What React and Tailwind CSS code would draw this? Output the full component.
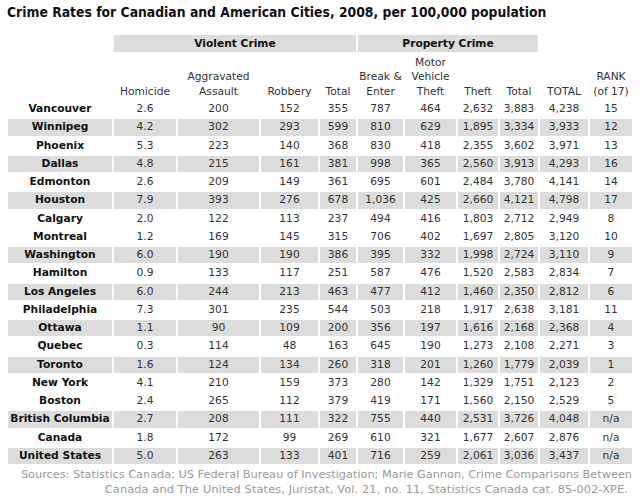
import React from "react";

const rows = [
  ["Vancouver", "2.6", "200", "152", "355", "787", "464", "2,632", "3,883", "4,238", "15", false],
  ["Winnipeg", "4.2", "302", "293", "599", "810", "629", "1,895", "3,334", "3,933", "12", true],
  ["Phoenix", "5.3", "223", "140", "368", "830", "418", "2,355", "3,602", "3,971", "13", false],
  ["Dallas", "4.8", "215", "161", "381", "998", "365", "2,560", "3,913", "4,293", "16", true],
  ["Edmonton", "2.6", "209", "149", "361", "695", "601", "2,484", "3,780", "4,141", "14", false],
  ["Houston", "7.9", "393", "276", "678", "1,036", "425", "2,660", "4,121", "4,798", "17", true],
  ["Calgary", "2.0", "122", "113", "237", "494", "416", "1,803", "2,712", "2,949", "8", false],
  ["Montreal", "1.2", "169", "145", "315", "706", "402", "1,697", "2,805", "3,120", "10", false],
  ["Washington", "6.0", "190", "190", "386", "395", "332", "1,998", "2,724", "3,110", "9", true],
  ["Hamilton", "0.9", "133", "117", "251", "587", "476", "1,520", "2,583", "2,834", "7", false],
  ["Los Angeles", "6.0", "244", "213", "463", "477", "412", "1,460", "2,350", "2,812", "6", true],
  ["Philadelphia", "7.3", "301", "235", "544", "503", "218", "1,917", "2,638", "3,181", "11", false],
  ["Ottawa", "1.1", "90", "109", "200", "356", "197", "1,616", "2,168", "2,368", "4", true],
  ["Quebec", "0.3", "114", "48", "163", "645", "190", "1,273", "2,108", "2,271", "3", false],
  ["Toronto", "1.6", "124", "134", "260", "318", "201", "1,260", "1,779", "2,039", "1", true],
  ["New York", "4.1", "210", "159", "373", "280", "142", "1,329", "1,751", "2,123", "2", false],
  ["Boston", "2.4", "265", "112", "379", "419", "171", "1,560", "2,150", "2,529", "5", false],
  ["British Columbia", "2.7", "208", "111", "322", "755", "440", "2,531", "3,726", "4,048", "n/a", true],
  ["Canada", "1.8", "172", "99", "269", "610", "321", "1,677", "2,607", "2,876", "n/a", false],
  ["United States", "5.0", "263", "133", "401", "716", "259", "2,061", "3,036", "3,437", "n/a", true],
];

const App = () => {
  return (
    <div className="w-[640px] h-[500px] bg-white font-['DejaVu_Sans',Verdana,sans-serif] overflow-hidden">
      <div className="ml-[7px] pt-[4px] text-[13.8px] leading-[16px] font-bold text-[#111] font-['DejaVu_Sans_Condensed','DejaVu_Sans',sans-serif]">
        Crime Rates for Canadian and American Cities, 2008, per 100,000 population
      </div>

      <table className="ml-[6px] mt-[13px] w-[628px] table-fixed border-separate border-spacing-[2px] text-[10.67px] text-[#333]">
        <colgroup>
          <col className="w-[104px]" />
          <col className="w-[62px]" />
          <col className="w-[81px]" />
          <col className="w-[57px]" />
          <col className="w-[36px]" />
          <col className="w-[45px]" />
          <col className="w-[51px]" />
          <col className="w-[40px]" />
          <col className="w-[38px]" />
          <col className="w-[48px]" />
          <col className="w-[42px]" />
        </colgroup>
        <thead>
          <tr className="h-[17px]">
            <th className="p-0"></th>
            <th colSpan={4} className="p-0 bg-[#dcdcdc] font-bold text-[#111] leading-[17px]">
              Violent Crime
            </th>
            <th colSpan={4} className="p-0 bg-[#dcdcdc] font-bold text-[#111] leading-[17px]">
              Property Crime
            </th>
            <th className="p-0"></th>
            <th className="p-0"></th>
          </tr>
          <tr className="h-[45px] font-normal leading-[14.5px] align-bottom">
            <th className="p-0 font-normal"></th>
            <th className="p-0 font-normal whitespace-nowrap">Homicide</th>
            <th className="p-0 font-normal whitespace-nowrap">
              Aggravated
              <br />
              Assault
            </th>
            <th className="p-0 font-normal whitespace-nowrap">Robbery</th>
            <th className="p-0 font-normal whitespace-nowrap">Total</th>
            <th className="p-0 font-normal whitespace-nowrap">
              Break &amp;
              <br />
              Enter
            </th>
            <th className="p-0 font-normal whitespace-nowrap">
              Motor
              <br />
              Vehicle
              <br />
              Theft
            </th>
            <th className="p-0 font-normal whitespace-nowrap">Theft</th>
            <th className="p-0 font-normal whitespace-nowrap">Total</th>
            <th className="p-0 font-normal whitespace-nowrap">TOTAL</th>
            <th className="p-0 font-normal whitespace-nowrap">
              RANK
              <br />
              (of 17)
            </th>
          </tr>
        </thead>
        <tbody>
          {rows.map((r) => {
            const shade = r[11] ? "bg-[#dcdcdc]" : "";
            return (
              <tr key={r[0]} className="h-[16.25px] leading-[14.25px]">
                <td className={`p-0 text-center font-bold text-[#111] whitespace-nowrap ${shade}`}>{r[0]}</td>
                {r.slice(1, 11).map((v, i) => (
                  <td key={i} className={`p-0 text-center whitespace-nowrap ${shade}`}>
                    {v}
                  </td>
                ))}
              </tr>
            );
          })}
        </tbody>
      </table>

      <div className="mt-[1px] w-[632px] text-right text-[11.3px] leading-[15px] text-[#999] whitespace-nowrap">
        <div>Sources: Statistics Canada; US Federal Bureau of Investigation; Marie Gannon, Crime Comparisons Between</div>
        <div className="pr-[4px] tracking-[0.14px]">
          Canada and The United States, Juristat, Vol. 21, no. 11, Statistics Canada cat. 85-002-XPE.
        </div>
      </div>
    </div>
  );
};

export default App;
